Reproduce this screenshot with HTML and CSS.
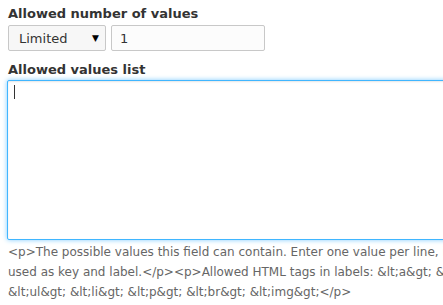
FILE: index.html
```html
<!DOCTYPE html>
<html>
<head>
<meta charset="utf-8">
<link rel="stylesheet" href="styles.css">
</head>
<body>
<div class="form">
  <div class="field">
    <div class="label">Allowed number of values</div>
    <div class="row">
      <div class="select"><span class="select-text">Limited</span><span class="arrow">▼</span></div>
      <div class="input">1</div>
    </div>
  </div>
  <div class="field field-list">
    <div class="label">Allowed values list</div>
    <div class="textarea"><span class="caret"></span></div>
    <div class="description">
      <div class="line">&lt;p&gt;The possible values this field can contain. Enter one value per line, in the format key|label.&lt;/p&gt;&lt;p&gt;The key is the stored value, and must be numeric. The label will be</div>
      <div class="line">used as key and label.&lt;/p&gt;&lt;p&gt;Allowed HTML tags in labels: &amp;lt;a&amp;gt; &amp;lt;b&amp;gt; &amp;lt;big&amp;gt; &amp;lt;code&amp;gt; &amp;lt;del&amp;gt; &amp;lt;em&amp;gt;</div>
      <div class="line">&amp;lt;ul&amp;gt; &amp;lt;li&amp;gt; &amp;lt;p&amp;gt; &amp;lt;br&amp;gt; &amp;lt;img&amp;gt;&lt;/p&gt;</div>
    </div>
  </div>
</div>
</body>
</html>
```
FILE: styles.css
```css
html, body {
  margin: 0;
  padding: 0;
  overflow: hidden;
  background: #ffffff;
}
body {
  font-family: "DejaVu Sans", sans-serif;
  color: #333333;
  width: 443px;
  height: 305px;
}
.form {
  padding: 6px 0 0 8px;
  width: 700px;
}
.label {
  font-size: 13px;
  font-weight: bold;
  line-height: 16px;
  color: #333333;
}
.row {
  display: flex;
  gap: 5px;
  margin-top: 3px;
}
.select {
  box-sizing: border-box;
  width: 98px;
  height: 26px;
  border: 1px solid #c8c8c8;
  border-radius: 2px;
  background: #f7f7f7;
  display: flex;
  align-items: center;
  justify-content: space-between;
  padding: 0 6px 0 10px;
  font-size: 13px;
  color: #333333;
}
.arrow {
  font-size: 9px;
  color: #000000;
}
.input {
  box-sizing: border-box;
  width: 154px;
  height: 26px;
  border: 1px solid #c8c8c8;
  border-radius: 2px;
  background: #fcfcfc;
  display: flex;
  align-items: center;
  padding: 0 8px;
  font-size: 13px;
  color: #333333;
}
.field-list {
  margin-top: 11px;
}
.textarea {
  box-sizing: border-box;
  margin-top: 2px;
  margin-left: -1px;
  width: 600px;
  height: 160px;
  border: 1px solid #40b6ff;
  border-radius: 2px;
  background: #ffffff;
  box-shadow: inset 0 1px 2px rgba(0, 0, 0, 0.1), 0 0 5px #7fcbff;
  padding: 4px 6px;
}
.caret {
  display: block;
  width: 1px;
  height: 14px;
  background: #333333;
}
.description {
  margin-top: 2px;
  font-size: 12px;
  line-height: 20px;
  color: #666666;
}
.line {
  white-space: nowrap;
}
```
